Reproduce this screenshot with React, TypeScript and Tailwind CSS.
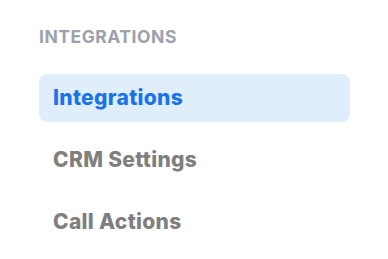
import React from "react";

const items = [
  { label: "Integrations", active: true },
  { label: "CRM Settings", active: false },
  { label: "Call Actions", active: false },
];

export default function App() {
  return (
    <div className="min-h-screen w-full bg-white font-['Inter',sans-serif]">
      <div className="pl-[39px] pr-[38px] pt-[27px]">
        <h2 className="text-[17.5px] font-bold uppercase leading-[20px] tracking-[0.03em] text-[#9ca1ab]">
          Integrations
        </h2>
        {/* nav list */}
        <nav className="mt-[27px] flex flex-col gap-[14px]">
          {items.map((item) => (
            <a
              key={item.label}
              href="#"
              className={
                item.active
                  ? "flex h-[48px] items-center rounded-[8px] bg-[#e0edfb] px-[14px] text-[21px] font-extrabold tracking-[0.015em] text-[#1a73e8]"
                  : "flex h-[48px] items-center rounded-[8px] px-[14px] text-[21px] font-extrabold tracking-[0.015em] text-[#7f7f7f]"
              }
            >
              {item.label}
            </a>
          ))}
        </nav>
      </div>
    </div>
  );
}
